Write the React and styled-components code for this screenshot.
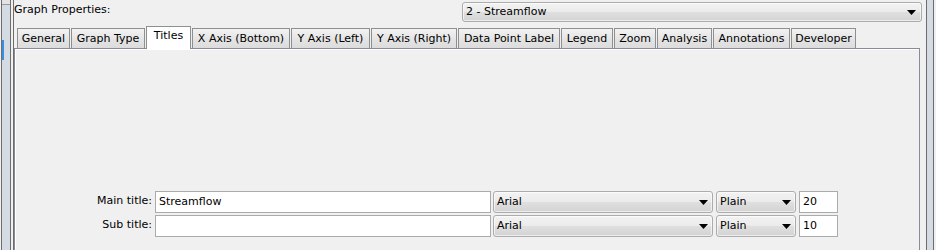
import React from 'react';
import styled, { createGlobalStyle } from 'styled-components';

const GlobalStyle = createGlobalStyle`
	html, body {
		margin: 0;
		padding: 0;
		background: #f0f0f0;
	}
	body {
		width: 936px;
		height: 250px;
		overflow: hidden;
		font-family: "DejaVu Sans", Tahoma, sans-serif;
		font-size: 11px;
		color: #000;
	}
`

const Frame = styled.div`
	display: flex;
	width: 936px;
	height: 250px;
	overflow: hidden;
	background: #f0f0f0;
`

// split pane edges at left and right
const LeftEdge = styled.div`
	flex: none;
	width: 14px;
	display: flex;
	box-sizing: border-box;
	padding-left: 1px;
`

const SideStrip = styled.div`
	position: relative;
	width: 8px;
	border-left: 1px solid #6d6d6d;
	border-right: 1px solid #6d6d6d;
	background: #d5dbe3;
	>.tree-top {
		height: 4px;
		background: #e3e3e3;
		border-bottom: 1px solid #9a9a9a;
	}
	>.tree-sel {
		margin-top: 35px;
		width: 2px;
		height: 20px;
		background: #3b8de0;
	}
`

const SideLine = styled.div`
	width: 1px;
	margin-left: ${p => p.$gap}px;
	background: #6d6d6d;
`

const RightEdge = styled.div`
	flex: none;
	width: 11px;
	display: flex;
	box-sizing: border-box;
	padding-left: 1px;
	>.strip {
		width: 6px;
		border-left: 1px solid #6d6d6d;
		border-right: 1px solid #6d6d6d;
		background: #d5dbe3;
	}
`

const Main = styled.div`
	flex: 1;
	display: flex;
	flex-direction: column;
	min-width: 0;
`

const Header = styled.div`
	height: 26px;
	box-sizing: border-box;
	display: flex;
	justify-content: space-between;
	align-items: flex-start;
	padding: 2px 3px 0 0;
`

const HeaderLabel = styled.div`
	margin-top: 1px;
	line-height: 14px;
`

const Combo = styled.div`
	box-sizing: border-box;
	display: flex;
	align-items: center;
	justify-content: space-between;
	flex: none;
	width: ${p => p.$width}px;
	height: ${p => p.$height || 22}px;
	margin-left: ${p => p.$gap || 0}px;
	padding: 0 ${p => p.$arrowPad || 4}px 0 3px;
	border: 1px solid #acacac;
	border-radius: 3px;
	background: linear-gradient(#f3f3f3 0%, #ebebeb 48%, #dfdfdf 52%, #d3d3d3 100%);
	box-shadow: inset 0 0 0 1px rgba(255, 255, 255, 0.6);
	line-height: 14px;
	white-space: nowrap;
`

const Arrow = () => (
	<svg width="9" height="5" viewBox="0 0 9 5">
		<polygon points="0,0 9,0 4.5,5" fill="#000" />
	</svg>
)

const TabRow = styled.div`
	position: relative;
	z-index: 1;
	height: 22px;
	display: flex;
	align-items: flex-end;
	gap: 1px;
	padding-left: 3px;
`

const Tab = styled.div`
	box-sizing: border-box;
	flex: none;
	width: ${p => p.$width}px;
	height: 20px;
	display: flex;
	align-items: center;
	justify-content: center;
	border: 1px solid #8e8f8f;
	border-bottom: none;
	background: linear-gradient(#f2f2f2, #e3e3e3 60%, #dcdcdc);
	white-space: nowrap;
	line-height: 14px;
	padding-top: 1px;
	&.selected {
		height: 23px;
		margin-bottom: -1px;
		background: #fff;
		align-items: flex-start;
		padding-top: 2px;
	}
`

const Panel = styled.div`
	flex: 1;
	margin-right: 5px;
	border: 1px solid #898c95;
	border-bottom: none;
	box-shadow: inset 1px 1px 0 #fff;
	background: #f0f0f0;
	padding-top: 142px;
	display: flex;
	flex-direction: column;
	gap: 2px;
`

const FieldRow = styled.div`
	display: flex;
	height: 22px;
	align-items: stretch;
`

const FieldLabel = styled.div`
	box-sizing: border-box;
	width: 140px;
	padding: 0 3px 3px 0;
	display: flex;
	align-items: center;
	justify-content: flex-end;
	white-space: nowrap;
`

const TextField = styled.div`
	box-sizing: border-box;
	flex: none;
	width: ${p => p.$width}px;
	margin-left: ${p => p.$gap || 0}px;
	border: 1px solid #ababab;
	background: #fff;
	padding: 0 3px;
	display: flex;
	align-items: center;
	line-height: 14px;
	white-space: nowrap;
`

const tabs = [
	{ name: 'General', width: 53 },
	{ name: 'Graph Type', width: 74 },
	{ name: 'Titles', width: 45, selected: true },
	{ name: 'X Axis (Bottom)', width: 98 },
	{ name: 'Y Axis (Left)', width: 79 },
	{ name: 'Y Axis (Right)', width: 86 },
	{ name: 'Data Point Label', width: 102 },
	{ name: 'Legend', width: 52 },
	{ name: 'Zoom', width: 42 },
	{ name: 'Analysis', width: 55 },
	{ name: 'Annotations', width: 77 },
	{ name: 'Developer', width: 65 },
]

const titles = [
	{ label: 'Main title:', text: 'Streamflow', size: '20' },
	{ label: 'Sub title:', text: '', size: '10' },
]

const App = () => {
	return (
		<>
			<GlobalStyle />
			<Frame>
				<LeftEdge>
					<SideStrip>
						<div className='tree-top' />
						<div className='tree-sel' />
					</SideStrip>
					<SideLine $gap={2} />
				</LeftEdge>
				<Main>
					<Header>
						<HeaderLabel>Graph Properties:</HeaderLabel>
						<Combo $width={460} $height={20} $arrowPad={5}>
							<span>2 - Streamflow</span>
							<Arrow />
						</Combo>
					</Header>
					<TabRow>
						{tabs.map((tab, key) => (
							<Tab
								key={`tab-${key}`}
								$width={tab.width}
								className={tab.selected ? 'selected' : ''}
							>
								{tab.name}
							</Tab>
						))}
					</TabRow>
					<Panel>
						{titles.map((row, key) => (
							<FieldRow key={`title-row-${key}`}>
								<FieldLabel>{row.label}</FieldLabel>
								<TextField $width={336}>{row.text}</TextField>
								<Combo $width={220} $gap={2}>
									<span>Arial</span>
									<Arrow />
								</Combo>
								<Combo $width={80} $gap={3}>
									<span>Plain</span>
									<Arrow />
								</Combo>
								<TextField $width={39} $gap={3}>{row.size}</TextField>
							</FieldRow>
						))}
					</Panel>
				</Main>
				<RightEdge>
					<div className='strip' />
				</RightEdge>
			</Frame>
		</>
	);
}

export default App;
